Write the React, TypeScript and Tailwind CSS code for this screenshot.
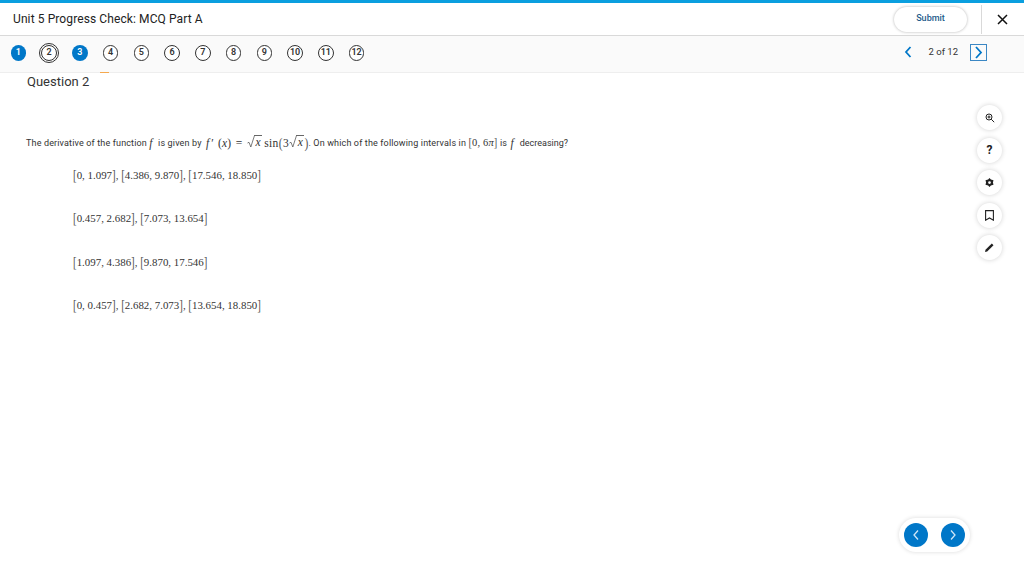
import React from "react";

const Br = ({ c }: { c: string }) => (
  <span className="inline-block scale-y-[1.25] font-light text-[#555]">{c}</span>
);

const Sqrt = ({ children }: { children: React.ReactNode }) => (
  <span className="inline-flex items-end">
    <svg width="8" height="13" viewBox="0 0 8 13" className="-mr-px">
      <path d="M0.5 8 L2 7.3 L3.8 12 L7.5 0.5 L8 0.5" fill="none" stroke="#444" strokeWidth="0.7" />
    </svg>
    <span className="border-t border-[#666] leading-[12px] italic px-[1.5px]">{children}</span>
  </span>
);

const M = ({ children, className = "" }: { children: React.ReactNode; className?: string }) => (
  <span className={`font-['Liberation_Serif',serif] text-[#333] ${className}`}>{children}</span>
);

const Step = ({ n }: { n: number }) => {
  const answered = n === 1 || n === 3;
  const base = "w-[15.5px] h-[15.5px] rounded-full flex items-center justify-center text-[9px] font-semibold";
  const inner = answered ? (
    <span className={`${base} bg-[#0077c8] text-white`}>{n}</span>
  ) : (
    <span className={`${base} border border-[#333] bg-white text-[#333]`}>{n}</span>
  );
  return (
    <div className="w-[30.75px] flex justify-center shrink-0">
      {n === 2 ? (
        <span className="w-[20px] h-[20px] rounded-full border border-[#333] flex items-center justify-center">{inner}</span>
      ) : (
        inner
      )}
    </div>
  );
};

const Tool = ({ children }: { children: React.ReactNode }) => (
  <div className="w-[25px] h-[25px] rounded-full bg-white shadow-[0_0_5px_rgba(0,0,0,0.18)] flex items-center justify-center text-[#222]">
    {children}
  </div>
);

const options = [
  "[0, 1.097], [4.386, 9.870], [17.546, 18.850]",
  "[0.457, 2.682], [7.073, 13.654]",
  "[1.097, 4.386], [9.870, 17.546]",
  "[0, 0.457], [2.682, 7.073], [13.654, 18.850]",
];

const Option = ({ text }: { text: string }) => (
  <M className="text-[10.9px] whitespace-pre">
    {text.split(/([\[\]])/).map((part, i) =>
      part === "[" || part === "]" ? <Br key={i} c={part} /> : <span key={i}>{part}</span>
    )}
  </M>
);

export default function App() {
  return (
    <div className="relative w-[1024px] h-[576px] overflow-hidden bg-white font-['Roboto',sans-serif] text-[#333]">
      <div className="h-[3px] bg-[#0a9fdf]" />
      <header className="h-[32px] flex items-center pl-[13px] border-b border-[#d9d9d9] box-content">
        <h1 className="text-[12px] font-normal text-[#222] flex-1 tracking-[0.1px]">Unit 5 Progress Check: MCQ Part A</h1>
        <button className="w-[73px] h-[25px] rounded-full bg-white shadow-[0_0_3px_rgba(0,0,0,0.3)] text-[9px] font-medium text-[#1f5c8b] mr-[14px]">Submit</button>
        <div className="w-[43px] h-[29px] border-l border-[#d9d9d9] flex items-center justify-center pr-[2px]">
          <svg width="11" height="11" viewBox="0 0 11 11"><path d="M1 1 L10 10 M10 1 L1 10" stroke="#111" strokeWidth="1.5" fill="none" /></svg>
        </div>
      </header>
      <nav className="h-[34px] pb-[2px] bg-[#fafafa] border-b border-[#eeeeee] box-content flex items-center pl-[3px]">
        <div className="flex flex-1 items-center">
          {Array.from({ length: 12 }, (_, i) => <Step key={i} n={i + 1} />)}
        </div>
        <svg width="8" height="12" viewBox="0 0 8 12" className="mr-[17px] mb-[2px]"><path d="M6.5 1 L2 6 L6.5 11" stroke="#0077c8" strokeWidth="1.8" fill="none" /></svg>
        <span className="text-[9.5px] text-[#333] mr-[12px] mb-[2px]">2 of 12</span>
        <div className="w-[17px] h-[17px] border border-[#3b87c4] flex items-center justify-center mr-[37px] mb-[2px]">
          <svg width="9" height="13" viewBox="0 0 9 13"><path d="M2 1 L7 6.5 L2 12" stroke="#0077c8" strokeWidth="1.8" fill="none" /></svg>
        </div>
      </nav>
      <main className="relative pl-[26px]">
        <div className="absolute left-[100px] -top-px w-[9px] h-px bg-[#f5a94f]" />
        <h2 className="text-[13px] font-normal text-[#333] leading-[18px] ml-px">Question 2</h2>
        <p className="mt-[45px] text-[9px] leading-[14px] text-[#333] flex items-center whitespace-pre h-[14px] tracking-[0.15px]">
          The derivative of the function <M className="text-[11.5px] italic mr-[3px]">f</M> is given by <M className="text-[11.5px] italic ml-[2px]">f</M>
          <M className="text-[11.5px] ml-[2px] mr-[4px]">′</M><M className="text-[11.5px]">(<i>x</i>)<span className="mx-[4.5px]">=</span></M>
          <M className="text-[11.5px] mr-[2px]"><Sqrt>x</Sqrt></M><M className="text-[11.5px] tracking-[0.4px]">sin<Br c="(" />3</M>
          <M className="text-[11.5px]"><Sqrt>x</Sqrt></M><M className="text-[11.5px]"><Br c=")" /></M>. On which of the following intervals in <M className="text-[10.5px]"><Br c="[" />0, 6<i>π</i><Br c="]" /></M> is <M className="text-[11.5px] italic mx-[1px]">f</M><span className="tracking-normal ml-[5px]">decreasing?</span>
        </p>
        <ul className="mt-[17px] pl-[47px] flex flex-col gap-[29.4px]">
          {options.map((o) => (
            <li key={o} className="h-[14px] leading-[14px]">
              <Option text={o} />
            </li>
          ))}
        </ul>
      </main>
      <aside className="absolute left-[977px] top-[105px] flex flex-col gap-[7.5px]">
        <Tool>
          <svg width="10" height="10" viewBox="0 0 10 10" fill="none" stroke="#222" strokeWidth="1"><circle cx="4" cy="4" r="3" /><path d="M6.2 6.2 L9.2 9.2 M2.5 4 H5.5 M4 2.5 V5.5" /></svg>
        </Tool>
        <Tool><span className="text-[12px] font-bold leading-none">?</span></Tool>
        <Tool>
          <svg width="11" height="11" viewBox="0 0 24 24"><path fill="#222" fillRule="evenodd" d="M12 2 L15 5.5 L20.7 7 L19.5 12 L20.7 17 L15 18.5 L12 22 L9 18.5 L3.3 17 L4.5 12 L3.3 7 L9 5.5 Z M12 9 A3 3 0 1 0 12 15 A3 3 0 1 0 12 9 Z" /></svg>
        </Tool>
        <Tool>
          <svg width="9" height="11" viewBox="0 0 9 11"><path d="M0.6 0.6 H8.4 V10.2 L4.5 8 L0.6 10.2 Z" fill="none" stroke="#222" strokeWidth="1.1" /></svg>
        </Tool>
        <Tool>
          <svg width="11" height="11" viewBox="0 0 11 11"><path d="M1 10 L1.5 7.8 L7.8 1.5 L9.5 3.2 L3.2 9.5 Z" fill="#222" /></svg>
        </Tool>
      </aside>
      <div className="absolute left-[899px] top-[518px] w-[71px] h-[34px] rounded-full bg-white shadow-[0_0_4px_rgba(0,0,0,0.15)] flex items-center justify-between px-[5px]">
        <span className="w-[24px] h-[24px] rounded-full bg-[#0077c8] flex items-center justify-center">
          <svg width="8" height="12" viewBox="0 0 8 12"><path d="M6 1.5 L2 6 L6 10.5" stroke="#cfe6f7" strokeWidth="1.3" fill="none" /></svg>
        </span>
        <span className="w-[24px] h-[24px] rounded-full bg-[#0077c8] flex items-center justify-center">
          <svg width="8" height="12" viewBox="0 0 8 12"><path d="M2 1.5 L6 6 L2 10.5" stroke="#cfe6f7" strokeWidth="1.3" fill="none" /></svg>
        </span>
      </div>
    </div>
  );
}
